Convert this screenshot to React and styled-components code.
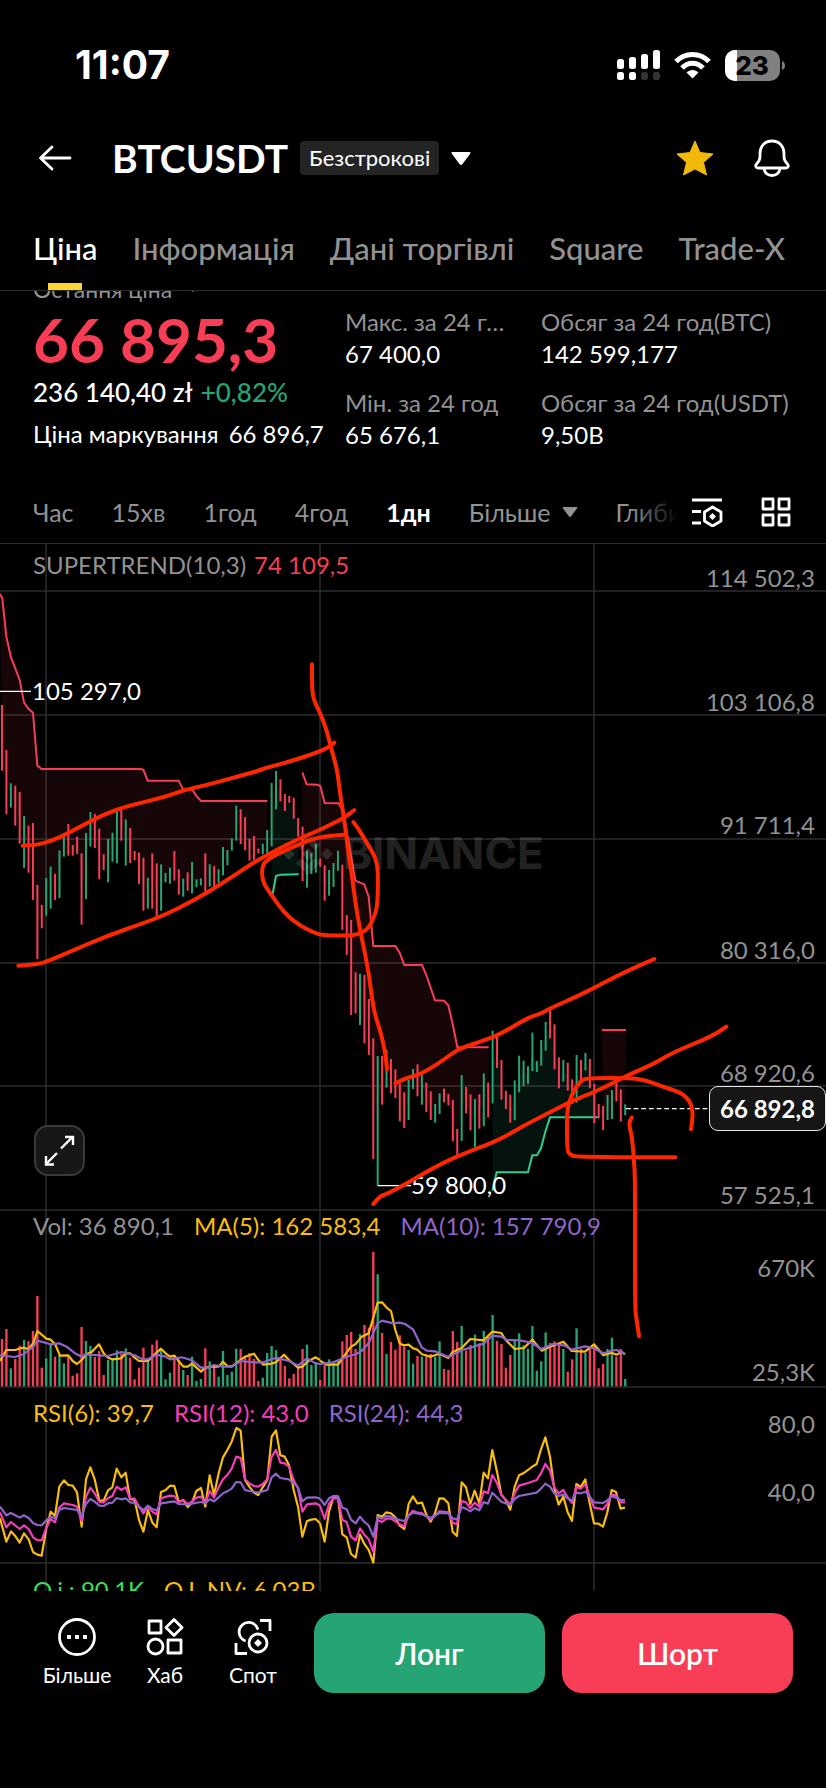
import React, { useState } from "react";
import styled, { createGlobalStyle } from "styled-components";

const RED = "#f83d56";
const GREEN = "#26a574";
const YELLOW = "#f9be0d";
const PINK = "#f63dbd";
const PURPLE = "#8e66c9";
const GREY = "#929292";
const LINE = "#2d2d2d";

const GlobalStyle = createGlobalStyle`
  * {
    box-sizing: border-box;
  }
  body {
    margin: 0;
    background: #000;
    color: #fff;
    font-family: Lato, "Noto Sans", "Liberation Sans", sans-serif;
    font-size: 24px;
    line-height: 28px;
  }
  button {
    margin: 0;
    padding: 0;
    border: 0;
    background: none;
    color: inherit;
    font: inherit;
    cursor: pointer;
  }
  svg {
    display: block;
    flex: none;
  }
`;

const Screen = styled.div`
  min-height: 100vh;
  display: flex;
  flex-direction: column;
  overflow: hidden;
`;

const StatusBar = styled.div`
  display: flex;
  align-items: center;
  justify-content: space-between;
  height: 68px;
  margin-top: 31px;
  padding: 0 40px 0 75px;
  font-family: Inter, "Liberation Sans", sans-serif;
  font-size: 39px;
  font-weight: 700;
`;

const StatusIcons = styled.div`
  display: flex;
  align-items: center;
  gap: 14px;
`;

const Header = styled.header`
  display: flex;
  align-items: center;
  height: 60px;
  margin-top: 29px;
  padding: 0 36px 0 38px;
`;

const IconButton = styled.button`
  display: flex;
  align-items: center;
`;

const PairButton = styled.button`
  display: flex;
  align-items: center;
  gap: 12px;
  margin-left: 40px;
  margin-right: auto;
`;

const PairName = styled.span`
  font-size: 39px;
  line-height: 44px;
  font-weight: 700;
`;

const Badge = styled.span`
  padding: 3px 9px;
  border-radius: 4px;
  background: #242424;
  font-size: 22px;
`;

const HeaderActions = styled.div`
  display: flex;
  align-items: center;
  gap: 40px;
`;

const TabList = styled.nav`
  display: flex;
  justify-content: space-between;
  height: 103px;
  padding: 0 41px 0 33px;
  border-bottom: 1px solid ${LINE};
`;

const Tab = styled.button`
  display: flex;
  flex-direction: column;
  align-items: center;
  justify-content: space-between;
  padding-top: 42px;
  color: ${({ $active }) => ($active ? "#fff" : GREY)};
  font-size: 31px;
  line-height: 36px;
  font-weight: 500;
  white-space: nowrap;

  &::after {
    content: "";
    width: 34px;
    height: 7px;
    background: ${({ $active }) => ($active ? "#fcd535" : "transparent")};
  }
`;

const Summary = styled.section`
  display: grid;
  grid-template-columns: 312px 196px 1fr;
  height: 190px;
  padding: 0 22px 0 33px;
  overflow: hidden;
`;

const PriceColumn = styled.div`
  display: flex;
  flex-direction: column;
  align-items: flex-start;
  margin-top: -16px;
  white-space: nowrap;
`;

const PriceKind = styled.button`
  display: flex;
  align-items: center;
  gap: 16px;
  color: ${GREY};
  font-size: 23px;
`;

const LastPrice = styled.p`
  margin: 4px 0;
  color: ${RED};
  font-size: 62px;
  line-height: 64px;
  font-weight: 700;
`;

const FiatRow = styled.p`
  display: flex;
  gap: 8px;
  margin: 0;
  font-size: 26px;
  line-height: 34px;
  font-weight: 500;
`;

const Change = styled.span`
  color: ${GREEN};
`;

const MarkRow = styled.p`
  display: flex;
  gap: 10px;
  margin: 11px 0 0;
`;

const Stats = styled.dl`
  display: flex;
  flex-direction: column;
  gap: 18px;
  margin: 15px 0 0;
  white-space: nowrap;
`;

const Stat = styled.div`
  dt {
    max-width: ${({ $narrow }) => ($narrow ? "162px" : "none")};
    overflow: hidden;
    text-overflow: ellipsis;
    color: ${GREY};
    line-height: 32px;
  }
  dd {
    margin: 0;
    line-height: 31px;
  }
`;

const Toolbar = styled.div`
  display: flex;
  align-items: center;
  height: 63px;
  border-bottom: 1px solid ${LINE};
  padding-right: 35px;
`;

const Frames = styled.div`
  position: relative;
  display: flex;
  flex: 1;
  align-self: stretch;
  align-items: center;
  gap: 38px;
  min-width: 0;
  margin-right: 4px;
  padding-left: 33px;
  overflow: hidden;

  &::after {
    content: "";
    position: absolute;
    top: 0;
    right: 0;
    bottom: 0;
    width: 60px;
    background: linear-gradient(90deg, transparent, #000 85%);
  }
`;

const Frame = styled.button`
  display: flex;
  flex: none;
  align-items: center;
  gap: 11px;
  color: ${({ $active }) => ($active ? "#fff" : GREY)};
  font-size: 25px;
  line-height: 32px;
  font-weight: ${({ $active }) => ($active ? 700 : 400)};
  white-space: nowrap;
`;

const ToolbarActions = styled.div`
  display: flex;
  gap: 38px;
`;

const ChartArea = styled.section`
  position: relative;
  overflow: hidden;
`;

const ChartSvg = styled.svg`
  width: 100%;
  height: auto;

  text {
    font-family: inherit;
    font-size: 24px;
  }
`;

const Legend = styled.div`
  position: absolute;
  top: ${({ $top }) => $top};
  left: 33px;
  display: flex;
  gap: ${({ $gap }) => $gap || 20}px;
  white-space: nowrap;
`;

const LegendItem = styled.span`
  color: ${({ $color }) => $color};
`;

const ExpandButton = styled.button`
  position: absolute;
  top: 55.5%;
  left: 34px;
  display: flex;
  align-items: center;
  justify-content: center;
  width: 51px;
  height: 51px;
  border: 2px solid #3a3a3a;
  border-radius: 14px;
  background: #161616;
`;

const PriceTag = styled.button`
  position: absolute;
  top: 51.8%;
  right: 0;
  height: 45px;
  padding: 0 10px;
  border: 1px solid #e6e6e6;
  border-radius: 9px;
  background: #161616;
  font-weight: 700;
`;

const BottomBar = styled.footer`
  display: flex;
  align-items: center;
  gap: 17px;
  padding: 22px 33px 95px;
`;

const NavItems = styled.nav`
  display: flex;
`;

const NavButton = styled.button`
  display: flex;
  flex-direction: column;
  align-items: center;
  gap: 6px;
  width: 88px;
  font-size: 21px;
  line-height: 26px;
`;

const TradeButton = styled.button`
  flex: 1;
  height: 80px;
  border-radius: 20px;
  background: ${({ $color }) => $color};
  font-size: 30px;
  font-weight: 600;
`;

const Signal = () => (
  <svg width="43" height="31" viewBox="0 0 43 31" fill="#fff">
    <rect x="0" y="9" width="7" height="10" rx="2.5" />
    <rect x="12" y="7" width="7" height="12" rx="2.5" />
    <rect x="24" y="4" width="7" height="15" rx="2.5" />
    <rect x="36" y="0" width="7" height="19" rx="2.5" />
    <rect x="0" y="22" width="7" height="8" rx="2.5" />
    <rect x="12" y="22" width="7" height="8" rx="2.5" />
    <rect x="24" y="22" width="7" height="8" rx="2.5" fill="#333" />
    <rect x="36" y="22" width="7" height="8" rx="2.5" fill="#333" />
  </svg>
);

const Wifi = () => (
  <svg width="37" height="28" viewBox="0 0 37 28">
    <g fill="none" stroke="#fff" strokeWidth="5">
      <path d="M2 10.500C11 1 26 1 35 10.500" />
      <path d="M8 17C14 10.500 23 10.500 29 17" />
    </g>
    <path d="M18.500 27.500L12.500 21.500C16 18 21 18 24.500 21.500Z" fill="#fff" />
  </svg>
);

const Battery = () => (
  <svg width="61" height="31" viewBox="0 0 61 31">
    <clipPath id="battery-body">
      <rect width="55" height="31" rx="10" />
    </clipPath>
    <g clipPath="url(#battery-body)">
      <rect width="55" height="31" fill="#808080" />
      <rect width="12" height="31" fill="#fff" />
    </g>
    <path d="M57 11C61 12 61 19 57 20Z" fill="#808080" />
    <text
      x="27"
      y="25"
      textAnchor="middle"
      fontSize="26"
      fontWeight="800"
      fill="#000"
    >
      23
    </text>
  </svg>
);

const Caret = ({ width = 10, height = 6 }) => (
  <svg width={width} height={height} viewBox="0 0 20 13" fill="currentColor">
    <path d="M1 0H19Q20 .5 19 2L11.500 12Q10 14 8.500 12L1 2Q0 .5 1 0Z" />
  </svg>
);

const BackIcon = () => (
  <svg
    width="34"
    height="26"
    viewBox="0 0 34 26"
    fill="none"
    stroke="#fff"
    strokeWidth="2.800"
    strokeLinecap="round"
    strokeLinejoin="round"
  >
    <path d="M32 13H3M14 2L2.500 13L14 24" />
  </svg>
);

const StarIcon = () => (
  <svg width="38" height="36" viewBox="0 0 38 36">
    <path
      d="M19 1L24 12.500L37 14L27.500 22.500L30.500 35L19 29L7.500 35L10.500 22.500L1 14L14 12.500Z"
      fill="#f0b90b"
      stroke="#f0b90b"
      strokeLinejoin="round"
    />
  </svg>
);

const BellIcon = () => (
  <svg
    width="36"
    height="38"
    viewBox="0 0 36 38"
    fill="none"
    stroke="#fff"
    strokeWidth="2.800"
    strokeLinejoin="round"
  >
    <path d="M18 2C10.500 2 6 7.500 6 14.500V18C6 21 4.500 23 2.500 25C1 27 2 29 4 29H32C34 29 35 27 33.500 25C31.500 23 30 21 30 18V14.500C30 7.500 25.500 2 18 2Z" />
    <path d="M10 30C11 34 14 36.500 18 36.500S25 34 26 30" />
  </svg>
);

const IndicatorIcon = () => (
  <svg
    width="31"
    height="30"
    viewBox="0 0 31 30"
    fill="none"
    stroke="#fff"
    strokeWidth="2.800"
    strokeLinejoin="round"
  >
    <path d="M0 3H30M0 14.500H9M0 26H9" />
    <path d="M20.500 10L29 15V24L20.500 29L12.500 24V15Z" />
    <path d="M20.500 16L24 19.500L20.500 23L17 19.500Z" fill="#fff" stroke="none" />
  </svg>
);

const GridIcon = () => (
  <svg
    width="30"
    height="30"
    viewBox="0 0 30 30"
    fill="none"
    stroke="#fff"
    strokeWidth="2.800"
    strokeLinejoin="round"
  >
    <path d="M2 2H12V12H2ZM18 2H28V12H18ZM2 18H12V28H2ZM18 18H28V28H18Z" />
  </svg>
);

const MoreIcon = () => (
  <svg width="38" height="38" viewBox="0 0 38 38">
    <circle cx="19" cy="19" r="17.500" fill="none" stroke="#fff" strokeWidth="2.800" />
    <path d="M9 17H13V21H9ZM17 17H21V21H17ZM25 17H29V21H25Z" fill="#fff" />
  </svg>
);

const HubIcon = () => (
  <svg
    width="38"
    height="38"
    viewBox="0 0 38 38"
    fill="none"
    stroke="#fff"
    strokeWidth="2.800"
    strokeLinejoin="round"
  >
    <path d="M3 3H15V15H3ZM22 22H35V35H22ZM28 1.500L36 9.500L28 17.500L20 9.500Z" />
    <circle cx="9.500" cy="28.500" r="7.500" />
  </svg>
);

const SpotIcon = () => (
  <svg
    width="38"
    height="38"
    viewBox="0 0 38 38"
    fill="none"
    stroke="#fff"
    strokeWidth="2.800"
    strokeLinejoin="round"
  >
    <path d="M26 2.500H36V13M2 25V35.500H13" />
    <path d="M10.500 22.500A9.500 9.500 0 1 1 23.500 10.500" strokeLinecap="round" />
    <circle cx="24" cy="25" r="9" />
    <path d="M24 21L28 25L24 29L20 25Z" fill="#fff" stroke="none" />
  </svg>
);

const ExpandIcon = () => (
  <svg
    width="31"
    height="31"
    viewBox="0 0 31 31"
    fill="none"
    stroke="#fff"
    strokeWidth="2.400"
  >
    <path d="M17 13.500L28.500 2M21 2H29V10M13 18L2 29M2 21V29.500H10" />
  </svg>
);

// The plot is drawn on a fine grid, three units to one pixel of the chart.
const STEP = 13.26;
const barX = (i) => 6 + i * STEP;

// one entry per day: r/g for the direction, then high and low
const parseCandles = (source, shift) =>
  source
    .trim()
    .split(/\s+/)
    .map((item) => {
      const [high, low] = item.slice(1).split("-").map(Number);
      return { up: item[0] === "g", high: high + shift, low: low + shift };
    });

const candles = [
  ...parseCandles(
    `r495-692 r630-823 g730-803 r737-857 r756-911 g828-984 r857-998 r849-1080
    r1035-1257 r1095-1165 g1014-1127 g980-1106 r1002-1080 g931-1074 g890-950
    r852-947 r915-947 r890-942 r940-1154 g879-1077 g816-920 r822-924 r866-1018
    r943-990 g897-1027 g878-965 g812-970 r804-902 g838-977 r864-969 r933-961
    r938-1032 r953-1112 g1013-1106 r940-1106 r970-1130 g973-1112 g999-1027
    g983-1031 r933-1022 r988-1064 g1016-1070 r997-1052 g966-1060 g1018-1042
    g1015-1036 r940-1054 g973-1040 r978-1040 g988-1028 g921-1006 g930-976
    g895-932 g797-902 r808-912 r831-931 r897-962 r888-960 r926-940 g911-943
    g870-940 g729-919 g693-808 r718-784 r762-813 r768-788 r773-836 r834-890
    r860-1023 g932-1043 g940-1002 g912-998 r956-980 r976-1082 g990-1067
    g969-1041 g932-992 r974-1170 r1125-1245 r1140-1425`,
    0
  ),
  ...parseCandles(
    `r217-340 g221-375 r225-430 r297-465 r415-777 g468-857 r468-614 g450-563
    r477-580 r508-594 r550-664 r577-684 g540-660 g507-567 r493-589 g520-614
    r548-636 r574-660 g612-668 g580-642 r566-607 r582-616 r600-724 r687-765
    g525-723 r561-640 r583-691 g597-742 r583-686 g520-679 r548-652 g392-610
    r410-504 r480-599 r572-627 r584-668 g541-661 g467-577 g482-558 g499-552
    g398-513 g483-516 g420-497 g366-452 r329-415 r373-508 r472-565 g480-545
    r488-572 r538-612 g465-608 r480-550 g459-511 r477-565 r552-670 r612-655
    r618-690 g585-660 g570-657 r548-604 r568-665 g613-646`,
    1080
  ),
];

const volumes = `417 387 505 477 437 420 424 393 288 503 475 433 470 465 490 470
  527 520 381 423 438 471 453 525 480 475 451 460 445 473 538 503 443 480 434
  421 450 538 518 466 480 510 525 470 543 537 445 484 500 530 453 525 515 446
  447 472 459 477 543 533 459 438 450 480 498 535 522 500 447 434 495 487 540
  495 478 489 484 424 405 396 447 402 375 383 156 223 399 462 426 449 406 440
  450 491 468 470 470 462 470 424 507 510 393 426 378 452 435 404 430 393 405
  345 423 432 503 465 418 400 436 446 378 512 484 397 429 424 430 447 515 478
  385 447 459 447 437 505 492 447 413 470 447 537`
  .trim()
  .split(/\s+/)
  .map(Number);

const VOLUME_BASE = 559;

const trends = [
  {
    color: RED,
    from: 0,
    to: 60,
    line: "0,162 7,175 19,290 33,352 46,385 59,420 72,487 86,507 99,518 112,677 125,687 420,687 430,689 443,722 536,722 549,748 578,750 589,768 603,783 802,783",
  },
  {
    color: "#2fce8d",
    from: 61,
    to: 67,
    line: "818,1062 828,1008 841,1004 896,1003",
  },
  {
    color: RED,
    from: 68,
    to: 110,
    line: "907,697 920,733 952,734 961,738 974,789 1016,790 1027,810 1045,900 1066,1022 1080,1028 1093,1033 1106,1070 1120,1218 1186,1218 1199,1238 1213,1275 1266,1275 1279,1305 1305,1381 1332,1382 1345,1396 1358,1452 1372,1521 1466,1522",
  },
  {
    color: "#2fce8d",
    from: 111,
    to: 134,
    line: "1477,1952 1490,1897 1584,1897 1597,1846 1611,1846 1623,1825 1636,1775 1650,1732 1795,1732",
  },
  { color: RED, from: 136, to: 141, line: "1806,1470 1878,1470" },
];

const trendFill = ({ from, to, line }) => {
  const mids = candles
    .slice(from, to + 1)
    .map((c, i) => `${barX(from + i)},${(c.high + c.low) / 2}`)
    .reverse();
  return `${line} ${mids.join(" ")}`;
};

const studies = [
  {
    color: YELLOW,
    left: "0,483 19,450 45,450 70,443 85,447 100,430 112,393 125,404 139,416 152,419 165,432 180,467 205,466 218,483 231,492 245,480 258,463 275,456 297,433 311,460 324,473 337,478 364,475 377,460 390,460 404,473 417,483 444,483 457,470 483,446 497,460 510,470 523,467 536,483 550,500 563,500 576,491 603,515 616,503 635,500 656,500 669,485 682,498 695,500 722,480 735,470 762,461 775,480 790,494 815,491 828,487 852,464 867,480 894,503 907,500 925,483 947,472 960,480",
    right: "0,482 20,494 54,494 67,475 93,440 107,432 125,410 146,400 173,308 186,307 199,322 213,333 226,390 239,430 250,436 266,434 279,445 292,449 306,463 330,470 358,461 385,474 398,456 425,444 451,417 491,421 517,395 544,399 557,420 584,447 612,444 637,419 665,452 690,440 730,425 755,453 795,455 822,433 850,466 875,458 890,464 905,456 915,463",
  },
  {
    color: PURPLE,
    left: "0,466 45,471 70,463 100,440 112,422 152,433 178,430 200,440 225,460 245,470 258,463 324,468 364,456 404,466 430,479 444,477 470,464 497,470 510,478 545,472 576,481 603,503 625,503 642,495 670,500 695,500 722,483 762,487 790,487 828,473 867,483 894,497 921,475 947,490 960,492",
    right: "0,492 40,487 80,470 107,463 125,453 146,430 173,370 186,362 220,370 239,368 255,372 279,388 306,443 320,452 345,454 385,471 425,451 451,443 491,431 517,407 544,410 560,420 600,421 637,429 663,447 700,432 735,437 755,449 795,439 822,445 850,460 875,452 890,450 915,462",
  },
  {
    color: YELLOW,
    left: "0,955 19,1025 33,994 45,1007 59,1028 72,1000 86,1018 99,1056 112,1064 125,1067 139,985 152,935 165,948 178,860 192,841 205,855 218,857 231,877 245,980 258,838 271,802 284,838 298,902 311,902 324,871 337,862 350,806 364,832 377,818 390,897 404,900 417,960 430,995 444,930 457,968 470,982 483,876 497,870 510,857 523,858 536,905 550,900 563,921 576,908 589,873 603,864 616,920 629,826 642,886 656,820 669,772 682,750 695,725 709,684 722,692 735,840 748,860 762,878 775,885 788,862 802,840 815,710 828,691 841,766 854,770 867,795 881,870 894,920 907,1010 921,963 934,959 947,957 960,970",
    right: "0,970 14,1025 27,935 40,892 54,892 67,1003 80,1012 93,1062 107,1073 120,1004 133,1032 146,1050 160,1088 173,945 186,950 199,937 213,940 226,952 239,977 253,987 266,912 279,889 292,910 306,908 319,944 332,965 345,940 358,895 372,896 385,910 398,996 411,1008 425,847 438,862 451,912 464,872 478,910 491,818 504,835 517,750 531,815 544,884 557,900 571,929 584,860 597,826 610,820 624,810 637,800 650,792 663,748 676,712 690,770 703,867 716,914 730,890 743,937 756,963 769,852 782,861 796,838 809,910 822,970 835,971 849,980 862,937 875,870 888,876 902,926 915,923",
  },
  {
    color: PINK,
    left: "0,937 19,982 33,966 59,987 72,976 86,987 99,1012 112,1020 125,1021 139,983 152,957 165,967 178,923 192,910 218,915 231,920 245,963 258,890 271,863 284,880 298,906 311,907 324,895 337,888 350,860 364,870 377,862 390,895 404,896 417,920 430,940 444,920 457,935 470,943 483,895 510,887 523,888 536,907 550,900 563,912 576,905 589,893 603,890 616,910 629,873 642,893 656,862 669,838 682,825 695,806 709,770 722,774 735,838 748,850 762,858 775,860 788,852 802,838 815,770 828,750 841,788 854,790 867,800 881,840 894,865 907,935 921,913 947,910 960,917",
    right: "0,917 14,957 27,912 40,895 54,895 67,960 80,966 93,1010 107,1021 120,985 133,1004 146,1018 160,1056 173,960 186,966 199,956 213,956 226,964 239,973 253,979 266,946 279,932 292,938 306,939 319,949 332,958 345,948 358,934 385,937 398,968 411,973 425,903 438,907 451,924 464,908 478,920 491,874 504,880 517,825 531,850 544,885 557,899 571,915 584,880 597,857 624,849 650,840 663,820 676,792 690,812 703,862 716,880 730,870 743,892 756,909 769,860 782,866 796,852 809,890 822,922 849,928 862,912 875,884 888,886 902,907 915,907",
  },
  {
    color: PURPLE,
    left: "0,920 19,946 33,939 59,953 72,946 86,954 99,969 112,975 125,976 139,961 152,950 165,955 178,930 192,924 231,930 245,948 258,912 271,897 284,905 298,917 311,918 324,910 337,908 350,894 364,898 377,895 390,907 404,909 417,920 430,930 444,917 457,927 470,931 483,910 523,904 536,912 563,913 603,906 616,910 629,898 642,904 656,892 669,880 682,874 695,866 709,846 722,847 735,870 748,873 775,878 802,870 815,832 828,821 841,834 867,838 881,850 894,862 907,904 921,893 947,892 960,896",
    right: "0,896 14,915 27,895 40,888 54,888 67,923 80,928 93,959 107,970 120,950 133,966 146,976 160,1010 173,951 186,956 199,948 213,950 226,956 239,960 253,963 266,947 279,938 306,943 332,954 358,939 385,940 398,955 411,958 425,922 438,926 451,934 464,924 478,931 491,906 504,911 517,878 544,905 571,915 584,897 597,888 650,878 663,866 676,851 690,860 703,880 716,888 730,884 743,895 756,902 769,878 782,880 796,875 809,890 822,907 849,909 862,901 875,889 888,893 902,900 915,900",
  },
];

// freehand marks: [x shift, y shift, points]
const strokes = [
  [0, 0, "68,917 100,916 135,909 180,892 230,866 290,834 350,808 420,789 490,772 550,751 620,735 700,713 770,694 800,683 880,662 960,634 985,622 1003,608"],
  [0, 0, "55,1277 115,1273 150,1261 215,1233 320,1188 440,1146 500,1122 560,1092 625,1056 700,1008 760,968 830,930 900,895 960,869 1000,850 1035,832 1063,810"],
  [720, 300, "340,546 355,565 370,592 400,640 411,670 414,700 413,790 405,825 390,857 375,873 350,884 320,887 248,886 220,877 180,857 145,830 115,795 97,768 75,738 67,715 66,690 70,672 85,657 120,638 200,603 245,590 312,584"],
  [720, 300, "216,73 216,140 219,170 228,195 240,218 260,270 272,320 285,365 293,400 300,460 310,520 318,580 325,640 335,700 345,780 360,870 375,940 388,1010 395,1070 405,1125 420,1170 430,1210 437,1250 441,1287"],
  [990, 1080, "196,550 225,535 260,527 300,506 340,480 385,447 430,432 480,415 520,397 580,362 610,347 630,342 660,325 740,290 800,260 860,228 920,200 973,177"],
  [990, 1080, "130,912 147,890 175,880 240,845 320,798 380,770 440,746 480,731 525,710 580,678 640,647 715,608 770,585 820,564 880,532 970,492 1010,468 1060,444 1120,420 1160,400 1189,380"],
  [990, 1080, "1036,772 860,772 800,770 735,770 720,764 711,750 711,640 716,610 730,575 750,545 768,534 900,534 945,540 990,557 1050,577 1070,592 1083,612 1088,635 1087,660 1083,688"],
  [990, 1080, "905,653 898,662 899,685 906,710 911,770 915,830 915,960 915,1225 920,1260 927,1308"],
];

const smoothPath = (points) => {
  const list = points.split(" ").map((p) => p.split(",").map(Number));
  const last = list[list.length - 1];
  let d = `M${list[0].join(" ")}`;
  for (let i = 1; i < list.length - 1; i++) {
    const [x, y] = list[i];
    const [nx, ny] = list[i + 1];
    d += `Q${x} ${y} ${(x + nx) / 2} ${(y + ny) / 2}`;
  }
  return `${d}L${last.join(" ")}`;
};

const axisLabels = [
  ["114 502,3", 43],
  ["103 106,8", 167],
  ["91 711,4", 290],
  ["80 316,0", 415],
  ["68 920,6", 538],
  ["57 525,1", 660],
  ["670K", 733],
  ["25,3K", 837],
  ["80,0", 889],
  ["40,0", 957],
];

const MarketChart = () => (
  <ChartSvg viewBox="0 0 826 1047" role="img" aria-label="Графік BTCUSDT">
    <g stroke={LINE} strokeWidth="1.500">
      {[47, 171, 295, 419, 542, 666, 843, 1019].map((y) => (
        <path key={y} d={`M0 ${y}H826`} />
      ))}
      {[46, 320, 594].map((x) => (
        <path key={x} d={`M${x} 0V1047`} />
      ))}
    </g>

    <g transform="scale(.33333) translate(0 -12)">
      {trends.map((trend) => (
        <g key={trend.from}>
          <polygon points={trendFill(trend)} fill={trend.color} opacity=".09" />
          <polyline
            points={trend.line}
            fill="none"
            stroke={trend.color}
            strokeWidth="6"
          />
        </g>
      ))}
      {candles.map((c, i) => (
        <rect
          key={i}
          x={barX(i) - 3}
          y={c.high}
          width="6"
          height={c.low - c.high}
          fill={c.up ? GREEN : RED}
        />
      ))}
      <g transform="translate(0 1980)">
        {candles.map((c, i) => (
          <rect
            key={i}
            x={barX(i) - 3.5}
            y={volumes[i]}
            width="7"
            height={VOLUME_BASE - volumes[i]}
            fill={c.up ? GREEN : RED}
          />
        ))}
        {studies.map((s, i) => (
          <g
            key={i}
            fill="none"
            stroke={s.color}
            strokeWidth="6.500"
            strokeLinejoin="round"
          >
            <polyline points={s.left} />
            <polyline points={s.right} transform="translate(960 0)" />
          </g>
        ))}
      </g>
      <g stroke="#fff" strokeWidth="4">
        <path d="M0 454H93M1133 1937H1233" />
        <path d="M1878 1706H2400" strokeDasharray="14 9" />
      </g>
    </g>

    <g fill="#fff" opacity=".13">
      <path d="M308 289L320 301L315 306L308 299L301 306L296 301ZM308 331L320 319L315 314L308 321L301 314L296 319ZM308 304L314 310L308 316L302 310ZM289 304L295 310L289 316L283 310ZM327 304L333 310L327 316L321 310Z" />
      <text
        x="343"
        y="325"
        style={{ fontFamily: "Inter, sans-serif", fontSize: 44, fontWeight: 700 }}
      >
        BINANCE
      </text>
    </g>

    <g fill={GREY} textAnchor="end">
      {axisLabels.map(([label, y]) => (
        <text key={label} x="815" y={y}>
          {label}
        </text>
      ))}
    </g>
    <g fill="#fff">
      <text x="32" y="156">
        105 297,0
      </text>
      <text x="411" y="650">
        59 800,0
      </text>
    </g>

    <g
      transform="scale(.33333) translate(0 -12)"
      fill="none"
      stroke="#ff2600"
      strokeWidth="12"
      strokeLinecap="round"
      strokeLinejoin="round"
    >
      {strokes.map(([x, y, points]) => (
        <path
          key={points}
          d={smoothPath(points)}
          transform={`translate(${x} ${y})`}
        />
      ))}
    </g>
  </ChartSvg>
);

const tabs = ["Ціна", "Інформація", "Дані торгівлі", "Square", "Trade-X"];
const frames = ["Час", "15хв", "1год", "4год", "1дн"];

const App = () => {
  const [tab, setTab] = useState("Ціна");
  const [frame, setFrame] = useState("1дн");

  return (
    <Screen>
      <GlobalStyle />
      <StatusBar>
        <span>11:07</span>
        <StatusIcons>
          <Signal />
          <Wifi />
          <Battery />
        </StatusIcons>
      </StatusBar>

      <Header>
        <IconButton aria-label="Назад">
          <BackIcon />
        </IconButton>
        <PairButton>
          <PairName>BTCUSDT</PairName>
          <Badge>Безстрокові</Badge>
          <Caret width={20} height={13} />
        </PairButton>
        <HeaderActions>
          <IconButton aria-label="Обране">
            <StarIcon />
          </IconButton>
          <IconButton aria-label="Сповіщення">
            <BellIcon />
          </IconButton>
        </HeaderActions>
      </Header>

      <TabList>
        {tabs.map((name) => (
          <Tab key={name} $active={name === tab} onClick={() => setTab(name)}>
            {name}
          </Tab>
        ))}
      </TabList>

      <Summary>
        <PriceColumn>
          <PriceKind>
            Остання ціна <Caret />
          </PriceKind>
          <LastPrice>66 895,3</LastPrice>
          <FiatRow>
            236 140,40 zł <Change>+0,82%</Change>
          </FiatRow>
          <MarkRow>
            <span>Ціна маркування</span>
            <span>66 896,7</span>
          </MarkRow>
        </PriceColumn>
        <Stats>
          <Stat $narrow>
            <dt>Макс. за 24 год</dt>
            <dd>67 400,0</dd>
          </Stat>
          <Stat $narrow>
            <dt>Мін. за 24 год</dt>
            <dd>65 676,1</dd>
          </Stat>
        </Stats>
        <Stats>
          <Stat>
            <dt>Обсяг за 24 год(BTC)</dt>
            <dd>142 599,177</dd>
          </Stat>
          <Stat>
            <dt>Обсяг за 24 год(USDT)</dt>
            <dd>9,50B</dd>
          </Stat>
        </Stats>
      </Summary>

      <Toolbar>
        <Frames>
          {frames.map((name) => (
            <Frame
              key={name}
              $active={name === frame}
              onClick={() => setFrame(name)}
            >
              {name}
            </Frame>
          ))}
          <Frame>
            Більше <Caret width={16} height={10} />
          </Frame>
          <Frame>Глибина</Frame>
        </Frames>
        <ToolbarActions>
          <IconButton aria-label="Індикатори">
            <IndicatorIcon />
          </IconButton>
          <IconButton aria-label="Макет">
            <GridIcon />
          </IconButton>
        </ToolbarActions>
      </Toolbar>

      <ChartArea>
        <MarketChart />
        <Legend $top="7px" $gap={8}>
          <LegendItem $color={GREY}>SUPERTREND(10,3)</LegendItem>
          <LegendItem $color={RED}>74 109,5</LegendItem>
        </Legend>
        <Legend $top="63.8%">
          <LegendItem $color={GREY}>Vol: 36 890,1</LegendItem>
          <LegendItem $color={YELLOW}>MA(5): 162 583,4</LegendItem>
          <LegendItem $color={PURPLE}>MA(10): 157 790,9</LegendItem>
        </Legend>
        <Legend $top="81.7%">
          <LegendItem $color={YELLOW}>RSI(6): 39,7</LegendItem>
          <LegendItem $color={PINK}>RSI(12): 43,0</LegendItem>
          <LegendItem $color={PURPLE}>RSI(24): 44,3</LegendItem>
        </Legend>
        <Legend $top="98.6%">
          <LegendItem $color="#3ddc5b">O.i.: 90,1K</LegendItem>
          <LegendItem $color={YELLOW}>O.I. NV: 6,03B</LegendItem>
        </Legend>
        <ExpandButton aria-label="На весь екран">
          <ExpandIcon />
        </ExpandButton>
        <PriceTag>66 892,8</PriceTag>
      </ChartArea>

      <BottomBar>
        <NavItems>
          <NavButton>
            <MoreIcon />
            Більше
          </NavButton>
          <NavButton>
            <HubIcon />
            Хаб
          </NavButton>
          <NavButton>
            <SpotIcon />
            Спот
          </NavButton>
        </NavItems>
        <TradeButton $color={GREEN}>Лонг</TradeButton>
        <TradeButton $color={RED}>Шорт</TradeButton>
      </BottomBar>
    </Screen>
  );
};

export default App;
